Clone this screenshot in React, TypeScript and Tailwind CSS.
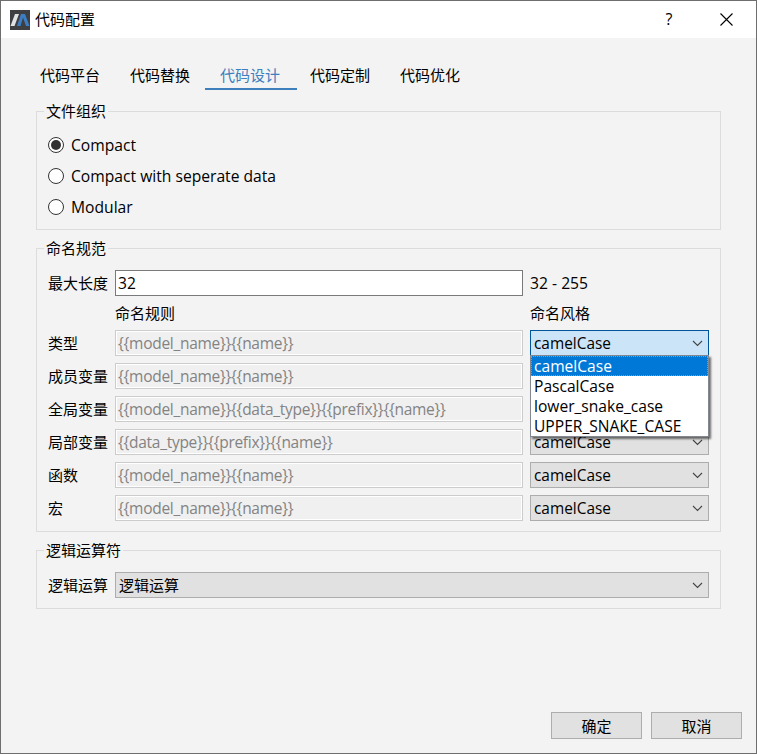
import React from "react";
import clsx from "clsx";

const TABS = ["代码平台", "代码替换", "代码设计", "代码定制", "代码优化"];
const LAYOUTS = ["Compact", "Compact with seperate data", "Modular"];
const STYLES = ["camelCase", "PascalCase", "lower_snake_case", "UPPER_SNAKE_CASE"];

const RULES = [
    { label: "类型", rule: "{{model_name}}{{name}}", open: true },
    { label: "成员变量", rule: "{{model_name}}{{name}}" },
    { label: "全局变量", rule: "{{model_name}}{{data_type}}{{prefix}}{{name}}" },
    { label: "局部变量", rule: "{{data_type}}{{prefix}}{{name}}" },
    { label: "函数", rule: "{{model_name}}{{name}}" },
    { label: "宏", rule: "{{model_name}}{{name}}" },
];

function Logo() {
    return (
        <svg width="20" height="20" viewBox="0 0 20 20" className="shrink-0">
            <rect width="20" height="20" fill="#3e3f42" />
            <path d="M.5 16 5 4h4L4.500 16Z" fill="#dfe1e2" />
            <path d="M7 16 11 4h4l4.500 12H16L13 7.500 10.500 16Z" fill="#3c7dc4" />
        </svg>
    );
}

function TitleBar() {
    return (
        <header className="flex h-[37px] shrink-0 items-center bg-white pl-[9px]">
            <Logo />
            <span className="ml-[5px] grow pb-[2px]">代码配置</span>
            <button className="w-[57px] pb-px pl-px text-center text-[16px]">?</button>
            <button className="flex w-[59px] justify-center">
                <svg width="13" height="13" viewBox="0 0 13 13" fill="none" stroke="#000" strokeWidth="1.1">
                    <path d="m.5.5 12 12M12.500.5l-12 12" />
                </svg>
            </button>
        </header>
    );
}

function Group({ title, className, children }: { title: string; className: string; children: React.ReactNode }) {
    return (
        <section className={clsx("border border-[#dcdcdc] px-[11px]", className)}>
            <h2 className="-ml-1 -mt-[11px] w-fit bg-[#f3f3f3] px-[2px] leading-5">{title}</h2>
            {children}
        </section>
    );
}

function Select({ value, open }: { value: string; open?: boolean }) {
    return (
        <div
            className={clsx(
                "relative flex h-[26px] items-center justify-between border pl-[3px] pr-[5px]",
                open ? "border-[#005499] bg-[#cce4f7]" : "border-[#adadad] bg-[#e1e1e1]"
            )}
        >
            <span className={clsx(value === "camelCase" && "pt-[2px] text-[15.4px]")}>{value}</span>
            <svg width="11" height="7" viewBox="0 0 11 7" fill="none" stroke="#444" strokeWidth="1.1">
                <path d="m1 1 4.500 4.500L10 1" />
            </svg>
            {open && <StyleList selected={value} />}
        </div>
    );
}

function StyleList({ selected }: { selected: string }) {
    return (
        <ul className="absolute -left-px top-[24px] z-10 w-[179px] border border-[#828790] bg-white text-[15.6px] shadow-[2px_2px_2px_rgba(0,0,0,0.55)]">
            {STYLES.map((s) => (
                <li
                    key={s}
                    className={clsx(
                        "h-5 border border-dotted pl-[2px] leading-[19px]",
                        s === selected ? "border-[#ff7a1a] bg-[#0078d7] text-white" : "border-transparent"
                    )}
                >
                    {s}
                </li>
            ))}
        </ul>
    );
}

export default function App() {
    return (
        <div className="flex h-[754px] w-[757px] flex-col border border-[#6e6e6e] bg-[#f3f3f3] font-['Open_Sans','Noto_Sans_CJK_SC',sans-serif] text-[15px] leading-5 text-black">
            <TitleBar />

            <main className="flex grow flex-col px-[35px] pt-[27px]">
                <nav className="-ml-[11px] flex">
                    {TABS.map((tab) => (
                        <button
                            key={tab}
                            className={clsx(
                                "h-[25px] border-b-2 pb-[3px] pl-[15px] text-left",
                                tab === "代码设计"
                                    ? "-mr-[2px] w-[92px] border-[#3d80bd] text-[#3d80bd]"
                                    : "w-[90px] border-transparent"
                            )}
                        >
                            {tab}
                        </button>
                    ))}
                </nav>

                <Group title="文件组织" className="mt-[21px] h-[119px]">
                    <div className="mt-[14px] flex flex-col gap-[11px] text-[15.65px]">
                        {LAYOUTS.map((name, i) => (
                            <label key={name} className="flex h-5 items-center gap-[7px]">
                                <span className="flex size-4 items-center justify-center rounded-full border border-[#333] bg-white">
                                    {i === 0 && <span className="size-[10px] rounded-full bg-[#333]" />}
                                </span>
                                {name}
                            </label>
                        ))}
                    </div>
                </Group>

                <Group title="命名规范" className="mt-[18px] h-[284px]">
                    <div className="mt-3 grid grid-cols-[60px_408px_179px] items-center gap-x-[7px] gap-y-[7px]">
                        <span>最大长度</span>
                        <div className="flex h-[26px] items-center border border-[#7a7a7a] bg-white pl-[2px] text-[15.6px]">
                            32
                        </div>
                        <span className="text-[15.7px]">32 - 255</span>

                        <span className="col-start-2">命名规则</span>
                        <span>命名风格</span>

                        {RULES.map(({ label, rule, open }) => (
                            <React.Fragment key={label}>
                                <span>{label}</span>
                                <div className="flex h-[26px] items-center border border-[#cccccc] bg-[#f0f0f0] pl-[2px] text-[15.5px] tracking-[-0.28px] text-[#838383] inset-ring inset-ring-white">
                                    {rule}
                                </div>
                                <Select value="camelCase" open={open} />
                            </React.Fragment>
                        ))}
                    </div>
                </Group>

                <Group title="逻辑运算符" className="mt-[18px] h-[59px]">
                    <div className="mt-3 grid grid-cols-[60px_594px] items-center gap-x-[7px]">
                        <span>逻辑运算</span>
                        <Select value="逻辑运算" />
                    </div>
                </Group>
            </main>

            <footer className="flex justify-end gap-[9px] pb-[14px] pr-[14px]">
                {["确定", "取消"].map((text) => (
                    <button key={text} className="h-[27px] w-[91px] border border-[#adadad] bg-[#e1e1e1]">
                        {text}
                    </button>
                ))}
            </footer>
        </div>
    );
}
